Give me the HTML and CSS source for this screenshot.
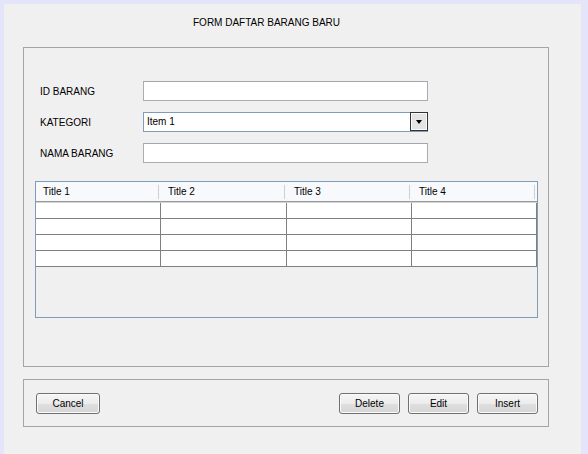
FILE: index.html
```html
<!DOCTYPE html>
<html>
<head>
<meta charset="utf-8">
<title>Form Daftar Barang Baru</title>
<link rel="stylesheet" href="styles.css">
</head>
<body>
<div class="window">
  <div class="title">FORM DAFTAR BARANG BARU</div>
  <div class="panel main">
    <div class="row">
      <label class="lbl">ID BARANG</label>
      <div class="field"></div>
    </div>
    <div class="row">
      <label class="lbl">KATEGORI</label>
      <div class="combo">
        <span class="combo-text">Item 1</span>
        <span class="combo-btn"><span class="arrow"></span></span>
      </div>
    </div>
    <div class="row">
      <label class="lbl">NAMA BARANG</label>
      <div class="field"></div>
    </div>
    <div class="table">
      <div class="thead">
        <div class="th"><div class="th-in">Title 1</div></div>
        <div class="th"><div class="th-in">Title 2</div></div>
        <div class="th"><div class="th-in">Title 3</div></div>
        <div class="th"><div class="th-in">Title 4</div></div>
      </div>
      <div class="tbody">
        <div class="td"></div><div class="td"></div><div class="td"></div><div class="td"></div>
        <div class="td"></div><div class="td"></div><div class="td"></div><div class="td"></div>
        <div class="td"></div><div class="td"></div><div class="td"></div><div class="td"></div>
        <div class="td"></div><div class="td"></div><div class="td"></div><div class="td"></div>
      </div>
    </div>
  </div>
  <div class="panel actions">
    <button class="btn cancel">Cancel</button>
    <div class="spacer"></div>
    <button class="btn">Delete</button>
    <button class="btn">Edit</button>
    <button class="btn">Insert</button>
  </div>
</div>
</body>
</html>
```

FILE: styles.css
```css
html, body {
  margin: 0;
  padding: 0;
}
body {
  background: #e4e4fa;
  width: 588px;
  height: 454px;
  overflow: hidden;
  padding: 4px 0 0 4px;
  box-sizing: border-box;
  font-family: "Liberation Sans", Arial, sans-serif;
  font-size: 10px;
  color: #000;
}
.window {
  width: 577px;
  height: 450px;
  background: #f0f0f0;
  display: flex;
  flex-direction: column;
  overflow: hidden;
}
.title {
  margin-top: 9px;
  height: 20px;
  line-height: 20px;
  padding-left: 189px;
  font-size: 10px;
}
.panel {
  box-sizing: border-box;
  width: 526px;
  margin-left: 19px;
  border: 1px solid #a5a5a5;
}
.main {
  margin-top: 14px;
  height: 320px;
  padding: 33px 0 0 11px;
}
.row {
  display: flex;
  align-items: center;
  height: 20px;
  margin: 0 0 11px 5px;
}
.lbl {
  width: 103px;
}
.field {
  width: 285px;
  height: 20px;
  box-sizing: border-box;
  border: 1px solid #abadb3;
  border-top-color: #a3a6ad;
  background: #fff;
}
.combo {
  display: flex;
  width: 285px;
  height: 20px;
  box-sizing: border-box;
  border: 1px solid #7f9db9;
  background: #fff;
}
.combo-text {
  flex: 1;
  padding-left: 3px;
  line-height: 18px;
}
.combo-btn {
  width: 18px;
  height: 19px;
  margin: -1px -1px 0 0;
  box-sizing: border-box;
  border: 1px solid #333;
  background: #e4e4e4;
  box-shadow: inset 0 0 0 1px #fafafa;
  display: flex;
  align-items: center;
  justify-content: center;
}
.arrow {
  width: 0;
  height: 0;
  border-left: 3px solid transparent;
  border-right: 3px solid transparent;
  border-top: 4px solid #000;
  margin-top: 1px;
}
.table {
  margin-top: 18px;
  width: 503px;
  height: 137px;
  box-sizing: border-box;
  border: 1px solid #7f9db9;
  background: #f0f0f0;
}
.thead {
  display: grid;
  grid-template-columns: 125px 126px 125px 125px;
  height: 19px;
  background: #f7f9fc;
  border-bottom: 1px solid #9a9a9a;
}
.th {
  padding: 3px 2px 2px 0;
}
.th-in {
  height: 14px;
  line-height: 14px;
  padding-left: 7px;
  border-right: 1px solid #cfcfcf;
}
.tbody {
  display: grid;
  grid-template-columns: 125px 126px 125px 125px;
  grid-auto-rows: 16px;
  border-top: 1px solid #d4d4d4;
}
.td {
  box-sizing: border-box;
  background: #fff;
  border-right: 1px solid #808080;
  border-bottom: 1px solid #808080;
}
.actions {
  margin-top: 12px;
  height: 48px;
  display: flex;
  align-items: flex-start;
  padding: 13px 10px 0 12px;
}
.spacer {
  flex: 1;
}
.btn {
  width: 61px;
  height: 21px;
  margin: 0 0 0 8px;
  padding: 0;
  box-sizing: border-box;
  border: 1px solid #707070;
  border-radius: 3px;
  background: linear-gradient(#f6f6f6, #ececec 50%, #dfdfdf 51%, #d6d6d6);
  box-shadow: inset 0 0 0 1px #fbfbfb;
  font-family: "Liberation Sans", Arial, sans-serif;
  font-size: 10px;
  color: #000;
}
.cancel {
  width: 64px;
  margin-left: 0;
}
```
